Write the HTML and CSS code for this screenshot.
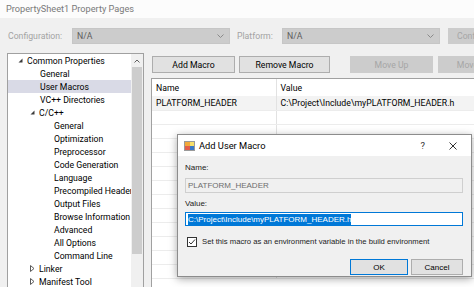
FILE: index.html
```html
<!DOCTYPE html>
<html lang="en">
<head>
<meta charset="UTF-8">
<title>PropertySheet1 Property Pages</title>
<link rel="stylesheet" href="styles.css">
</head>
<body>

<div class="titlebar">PropertySheet1 Property Pages</div>

<div class="config">
    <span class="lbl lbl-config">Configuration:</span>
    <div class="combo">
        <span>N/A</span>
        <svg width="7" height="4" viewBox="0 0 7 4"><path d="M0.5 0.5 L3.5 3.5 L6.5 0.5" fill="none" stroke="#8a8a8a" stroke-width="1"/></svg>
    </div>
    <span class="lbl lbl-plat">Platform:</span>
    <div class="combo">
        <span>N/A</span>
        <svg width="7" height="4" viewBox="0 0 7 4"><path d="M0.5 0.5 L3.5 3.5 L6.5 0.5" fill="none" stroke="#8a8a8a" stroke-width="1"/></svg>
    </div>
    <button class="btn disabled cm-btn">Configuration Manager...</button>
</div>

<div class="main">
    <div class="tree">
        <ul class="tree-items">
            <li class="lv0"><span class="tw"><svg width="5" height="5" viewBox="0 0 5 5"><path d="M4.5 0.5 L4.5 4.5 L0.5 4.5 Z" fill="#3c3c3c"/></svg></span>Common Properties</li>
            <li class="lv1 leaf">General</li>
            <li class="lv1 leaf selected">User Macros</li>
            <li class="lv1 leaf">VC++ Directories</li>
            <li class="lv1"><span class="tw"><svg width="5" height="5" viewBox="0 0 5 5"><path d="M4.5 0.5 L4.5 4.5 L0.5 4.5 Z" fill="#3c3c3c"/></svg></span>C/C++</li>
            <li class="lv2">General</li>
            <li class="lv2">Optimization</li>
            <li class="lv2">Preprocessor</li>
            <li class="lv2">Code Generation</li>
            <li class="lv2">Language</li>
            <li class="lv2">Precompiled Headers</li>
            <li class="lv2">Output Files</li>
            <li class="lv2">Browse Information</li>
            <li class="lv2">Advanced</li>
            <li class="lv2">All Options</li>
            <li class="lv2">Command Line</li>
            <li class="lv1"><span class="tw"><svg width="5" height="7" viewBox="0 0 5 7"><path d="M0.5 0.5 L4 3.5 L0.5 6.5 Z" fill="none" stroke="#5a5a5a" stroke-width="1"/></svg></span>Linker</li>
            <li class="lv1"><span class="tw"><svg width="5" height="7" viewBox="0 0 5 7"><path d="M0.5 0.5 L4 3.5 L0.5 6.5 Z" fill="none" stroke="#5a5a5a" stroke-width="1"/></svg></span>Manifest Tool</li>
        </ul>
        <div class="scrollbar">
            <div class="sb-up"><svg width="6" height="4" viewBox="0 0 6 4"><path d="M0.5 3.5 L3 1 L5.5 3.5" fill="none" stroke="#606060" stroke-width="1"/></svg></div>
            <div class="sb-thumb"></div>
        </div>
    </div>

    <div class="pane">
        <div class="toolbar">
            <button class="btn btn-add">Add Macro</button>
            <button class="btn btn-remove">Remove Macro</button>
            <button class="btn disabled btn-up">Move Up</button>
            <button class="btn disabled btn-down">Move Down</button>
        </div>
        <div class="grid">
            <table>
                <tr class="head"><td class="c-name">Name</td><td>Value</td></tr>
                <tr class="first"><td class="c-name">PLATFORM_HEADER</td><td>C:\Project\Include\myPLATFORM_HEADER.h</td></tr>
                <tr><td class="c-name"></td><td></td></tr>
                <tr><td class="c-name"></td><td></td></tr>
                <tr><td class="c-name"></td><td></td></tr>
                <tr><td class="c-name"></td><td></td></tr>
                <tr><td class="c-name"></td><td></td></tr>
                <tr><td class="c-name"></td><td></td></tr>
                <tr><td class="c-name"></td><td></td></tr>
                <tr><td class="c-name"></td><td></td></tr>
                <tr><td class="c-name"></td><td></td></tr>
                <tr><td class="c-name"></td><td></td></tr>
                <tr><td class="c-name"></td><td></td></tr>
                <tr><td class="c-name"></td><td></td></tr>
            </table>
        </div>
    </div>
</div>

<div class="dialog">
    <div class="dlg-title">
        <svg class="dlg-icon" width="11" height="10" viewBox="0 0 11 10">
            <rect x="0.5" y="0.5" width="10" height="9" fill="#e8e8e8" stroke="#9a9a9a"/>
            <rect x="1" y="1" width="5" height="4" fill="#f2a93b"/>
            <rect x="6" y="5" width="4" height="4" fill="#3a78c8"/>
            <rect x="1" y="5" width="5" height="4" fill="#e35d4b"/>
            <rect x="6" y="1" width="4" height="4" fill="#f7df6a"/>
        </svg>
        <span class="dlg-caption">Add User Macro</span>
        <span class="dlg-help">?</span>
        <svg class="dlg-close" width="8" height="8" viewBox="0 0 8 8"><path d="M0.5 0.5 L7.5 7.5 M7.5 0.5 L0.5 7.5" stroke="#333" stroke-width="1"/></svg>
    </div>
    <div class="dlg-body">
        <div class="field-label">Name:</div>
        <div class="textbox readonly">PLATFORM_HEADER</div>
        <div class="field-label value-label">Value:</div>
        <div class="textbox focused"><span class="sel">C:\Project\Include\myPLATFORM_HEADER.h</span></div>
        <div class="check-row">
            <span class="checkbox"><svg width="8" height="8" viewBox="0 0 8 8"><path d="M1 4 L3 6 L7 1.5" fill="none" stroke="#333" stroke-width="1"/></svg></span>
            <span class="check-text">Set this macro as an environment variable in the build environment</span>
        </div>
        <div class="dlg-buttons">
            <button class="btn btn-ok">OK</button>
            <button class="btn btn-cancel">Cancel</button>
        </div>
    </div>
</div>

</body>
</html>
```

FILE: styles.css
```css
* {
    box-sizing: border-box;
}
body {
    margin: 0;
    width: 474px;
    height: 287px;
    overflow: hidden;
    position: relative;
    background: #f0f0f0;
    font-family: Roboto, "Open Sans", sans-serif;
    font-size: 8.7px;
    color: #000;
}
.titlebar {
    height: 18px;
    line-height: 18px;
    padding-left: 6px;
    background: #fcfcfc;
    color: #7a7a7a;
    font-size: 9.2px;
}
.config {
    display: flex;
    align-items: center;
    height: 35px;
    padding: 10px 0 9px 8px;
}
.config > * {
    flex: none;
}
.lbl {
    color: #a3a3a3;
}
.lbl-config {
    width: 64px;
}
.lbl-plat {
    width: 45px;
    margin-left: 7px;
}
.combo {
    width: 158px;
    height: 16px;
    display: flex;
    align-items: center;
    justify-content: space-between;
    padding: 0 5px 0 4px;
    background: #cccccc;
    border: 1px solid #c6c6c6;
    color: #5c5c5c;
}
.btn {
    flex: none;
    height: 17px;
    padding: 0;
    font: inherit;
    color: #000;
    background: #e1e1e1;
    border: 1px solid #adadad;
}
.btn.disabled {
    background: #cccccc;
    border-color: #cccccc;
    color: #a6a6a6;
}
.cm-btn {
    margin-left: 8px;
    width: 120px;
    height: 16px;
    text-align: left;
    padding-left: 8px;
    white-space: nowrap;
}
.main {
    display: flex;
    gap: 7px;
    height: 234px;
    padding-left: 7px;
}
.tree {
    width: 137px;
    flex: none;
    display: flex;
    background: #fff;
    border: 1px solid #a0a0a0;
    border-bottom: none;
}
.tree-items {
    flex: 1;
    min-width: 0;
    margin: 0;
    padding: 0;
    list-style: none;
    overflow: hidden;
}
.tree-items li {
    height: 13px;
    display: flex;
    align-items: center;
    white-space: nowrap;
}
.tw {
    width: 9px;
    flex: none;
    display: flex;
    align-items: center;
}
.lv0 {
    padding-left: 10px;
}
.lv1 {
    padding-left: 22px;
}
.lv1.leaf {
    padding-left: 32px;
}
.lv2 {
    padding-left: 46px;
}
.tree-items li.selected {
    background: #d9dae6;
}
.scrollbar {
    width: 12px;
    flex: none;
    background: #f0f0f0;
}
.sb-up {
    height: 13px;
    display: flex;
    align-items: center;
    justify-content: center;
}
.sb-thumb {
    height: 187px;
    margin: 0 1px;
    background: #cdcdcd;
}
.pane {
    flex: 1;
    min-width: 0;
    display: flex;
    flex-direction: column;
}
.toolbar {
    display: flex;
    margin-top: 3px;
    padding-left: 1px;
}
.btn-add {
    width: 83px;
}
.btn-remove {
    width: 91px;
    margin-left: 4px;
}
.btn-up {
    width: 83px;
    margin-left: 20px;
}
.btn-down {
    width: 83px;
    margin-left: 5px;
}
.grid {
    flex: 1;
    margin-top: 5px;
    overflow: hidden;
    background: #fff;
    border: 1px solid #a0a0a0;
    border-right: none;
    border-bottom: none;
}
.grid table {
    width: 100%;
    border-collapse: collapse;
}
.grid td {
    height: 14px;
    padding: 0 0 0 4px;
    white-space: nowrap;
    border-bottom: 1px solid #ececec;
}
.grid .c-name {
    width: 124px;
    border-right: 1px solid #e2e2e2;
}
.grid .head td {
    height: 17px;
    border-bottom: none;
}
.grid .first td {
    background: #f3f3f3;
}
.dialog {
    position: absolute;
    left: 177px;
    top: 134px;
    width: 295px;
    height: 143px;
    background: #f0f0f0;
    border: 1px solid #8c8c8c;
    box-shadow: 0 2px 8px rgba(0, 0, 0, 0.35);
    font-family: "Liberation Sans", Arial, sans-serif;
    font-size: 8px;
}
.dlg-title {
    height: 21px;
    display: flex;
    align-items: center;
    padding: 0 14px 0 6px;
    background: #fff;
    font-family: Roboto, "Open Sans", sans-serif;
    font-size: 9.3px;
}
.dlg-icon {
    margin-right: 4px;
}
.dlg-help {
    margin-left: auto;
    margin-right: 24px;
    font-size: 9.5px;
    color: #333;
}
.dlg-body {
    padding: 0 8px 0 7px;
}
.field-label {
    margin-top: 6px;
    height: 12px;
    line-height: 12px;
    color: #222;
}
.value-label {
    margin-top: 5px;
}
.textbox {
    height: 15px;
    margin-top: 4px;
    padding-left: 2px;
    display: flex;
    align-items: center;
    white-space: nowrap;
    border: 1px solid #cfcfcf;
}
.textbox.readonly {
    background: #f0f0f0;
    color: #6d6d6d;
}
.textbox.focused {
    height: 14px;
    margin-top: 2px;
    background: #fff;
    border-color: #0078d7;
}
.sel {
    background: #0078d7;
    color: #fff;
    line-height: 11px;
}
.check-row {
    margin-top: 10px;
    height: 11px;
    display: flex;
    align-items: center;
    padding-left: 2px;
    color: #222;
}
.check-text {
    font-size: 7.7px;
}
.checkbox {
    width: 10px;
    height: 10px;
    margin-right: 5px;
    display: flex;
    align-items: center;
    justify-content: center;
    background: #fff;
    border: 1px solid #333;
}
.dlg-buttons {
    margin-top: 12px;
    display: flex;
    justify-content: flex-end;
    gap: 3px;
}
.btn-ok {
    width: 58px;
    height: 16px;
    border-color: #0078d7;
}
.btn-cancel {
    width: 52px;
    height: 16px;
}
```
